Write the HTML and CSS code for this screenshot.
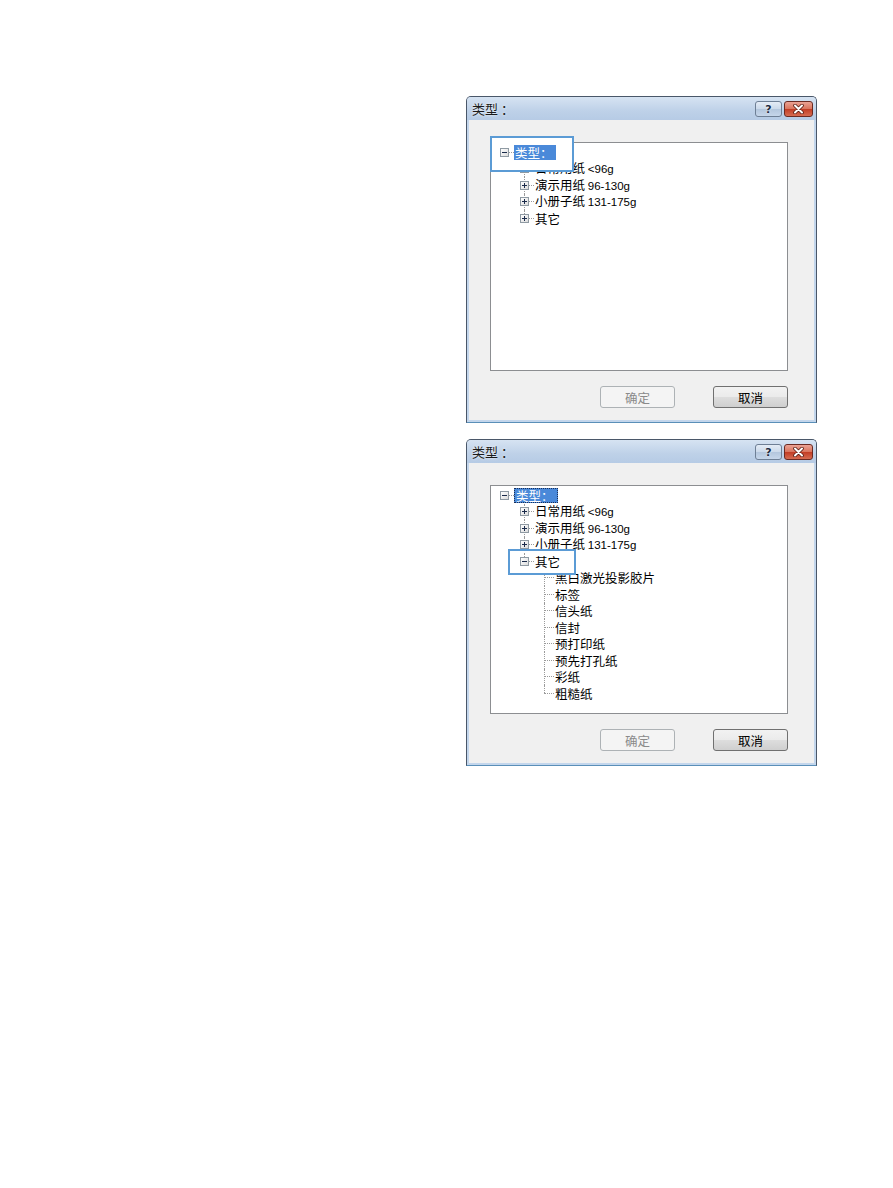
FILE: index.html
```html
<!DOCTYPE html>
<html lang="zh-CN">
<head>
    <meta charset="UTF-8">
    <title>类型</title>
    <link rel="stylesheet" href="styles.css">
</head>
<body>
    <div class="page">
        <!-- 第一个对话框：类型未展开 -->
        <div class="dialog">
            <div class="titlebar">
                <span class="title">类型 ：</span>
                <span class="caption-btn help">?</span>
                <span class="caption-btn close">
                    <svg width="13" height="10" viewBox="0 0 13 10">
                        <path d="M3 1.5 L10 8.5 M10 1.5 L3 8.5" stroke="#5a1d14" stroke-width="3.6" stroke-linecap="round"/>
                        <path d="M3 1.5 L10 8.5 M10 1.5 L3 8.5" stroke="#ffffff" stroke-width="2" stroke-linecap="round"/>
                    </svg>
                </span>
            </div>
            <div class="client">
                <div class="tree">
                    <div class="row level-0 callout callout-root">
                        <span class="box minus"></span><span class="dash"></span><span class="label selected">类型：</span>
                    </div>
                    <div class="row level-1">
                        <span class="box plus"></span><span class="dash"></span><span class="label">日常用纸 <span class="latin">&lt;96g</span></span>
                    </div>
                    <div class="row level-1">
                        <span class="box plus"></span><span class="dash"></span><span class="label">演示用纸 <span class="latin">96-130g</span></span>
                    </div>
                    <div class="row level-1">
                        <span class="box plus"></span><span class="dash"></span><span class="label">小册子纸 <span class="latin">131-175g</span></span>
                    </div>
                    <div class="row level-1 last">
                        <span class="box plus"></span><span class="dash"></span><span class="label">其它</span>
                    </div>
                </div>
                <div class="buttons">
                    <button class="btn" disabled>确定</button>
                    <button class="btn">取消</button>
                </div>
            </div>
        </div>

        <!-- 第二个对话框：其它已展开 -->
        <div class="dialog">
            <div class="titlebar">
                <span class="title">类型 ：</span>
                <span class="caption-btn help">?</span>
                <span class="caption-btn close">
                    <svg width="13" height="10" viewBox="0 0 13 10">
                        <path d="M3 1.5 L10 8.5 M10 1.5 L3 8.5" stroke="#5a1d14" stroke-width="3.6" stroke-linecap="round"/>
                        <path d="M3 1.5 L10 8.5 M10 1.5 L3 8.5" stroke="#ffffff" stroke-width="2" stroke-linecap="round"/>
                    </svg>
                </span>
            </div>
            <div class="client">
                <div class="tree">
                    <div class="row level-0">
                        <span class="box minus"></span><span class="dash"></span><span class="label selected focus">类型：</span>
                    </div>
                    <div class="row level-1">
                        <span class="box plus"></span><span class="dash"></span><span class="label">日常用纸 <span class="latin">&lt;96g</span></span>
                    </div>
                    <div class="row level-1">
                        <span class="box plus"></span><span class="dash"></span><span class="label">演示用纸 <span class="latin">96-130g</span></span>
                    </div>
                    <div class="row level-1">
                        <span class="box plus"></span><span class="dash"></span><span class="label">小册子纸 <span class="latin">131-175g</span></span>
                    </div>
                    <div class="row level-1 last callout callout-other">
                        <span class="box minus"></span><span class="dash"></span><span class="label">其它</span>
                    </div>
                    <div class="row level-2"><span class="leaf"></span><span class="label">黑白激光投影胶片</span></div>
                    <div class="row level-2"><span class="leaf"></span><span class="label">标签</span></div>
                    <div class="row level-2"><span class="leaf"></span><span class="label">信头纸</span></div>
                    <div class="row level-2"><span class="leaf"></span><span class="label">信封</span></div>
                    <div class="row level-2"><span class="leaf"></span><span class="label">预打印纸</span></div>
                    <div class="row level-2"><span class="leaf"></span><span class="label">预先打孔纸</span></div>
                    <div class="row level-2"><span class="leaf"></span><span class="label">彩纸</span></div>
                    <div class="row level-2 last"><span class="leaf"></span><span class="label">粗糙纸</span></div>
                </div>
                <div class="buttons">
                    <button class="btn" disabled>确定</button>
                    <button class="btn">取消</button>
                </div>
            </div>
        </div>
    </div>
</body>
</html>
```

FILE: styles.css
```css
body {
    margin: 0;
    background: #ffffff;
    font-family: "Noto Sans CJK SC", "Liberation Sans", sans-serif;
}
.page {
    display: flex;
    flex-direction: column;
    gap: 16px;
    padding: 96px 0 0 466px;
}
/* 窗口外框 */
.dialog {
    width: 351px;
    height: 327px;
    box-sizing: border-box;
    border: 1px solid #4a5769;
    border-bottom-color: #5a8fb8;
    border-radius: 5px 5px 0 0;
    background: #c3d6ec;
    display: flex;
    flex-direction: column;
}
.titlebar {
    height: 23px;
    flex: none;
    display: flex;
    align-items: flex-start;
    padding: 4px 3px 0 5px;
    box-sizing: border-box;
    border-radius: 4px 4px 0 0;
    background: linear-gradient(#d6e3f2, #bed1e8 60%, #b6cbe5);
}
.title {
    flex: 1;
    font-size: 13px;
    line-height: 15px;
    color: #1a1a1a;
    text-shadow: 0 0 3px #ffffff;
}
.caption-btn {
    height: 16px;
    box-sizing: border-box;
    border-radius: 3px;
    display: flex;
    align-items: center;
    justify-content: center;
}
.help {
    width: 27px;
    margin-right: 2px;
    border: 1px solid #6e7f95;
    background: linear-gradient(#e4ecf6, #cbd9ea 50%, #b3c6dd 51%, #c6d6ea);
    font-family: "DejaVu Sans", sans-serif;
    font-weight: bold;
    font-size: 11px;
    color: #1d2b3f;
    text-shadow: 0 0 2px #ffffff;
}
.close {
    width: 29px;
    border: 1px solid #6b2a22;
    background: linear-gradient(#eba395, #d9735c 50%, #c23c24 51%, #d66c52);
}
/* 客户区 */
.client {
    flex: 1;
    margin: 0 2px 2px;
    background: #f0f0f0;
    padding: 22px 26px 0 21px;
    display: flex;
    flex-direction: column;
}
.tree {
    height: 229px;
    box-sizing: border-box;
    border: 1px solid #8c8e91;
    background: #ffffff;
    padding-top: 1px;
}
.row {
    position: relative;
    height: 16.5px;
    display: flex;
    align-items: center;
    font-size: 12.5px;
    color: #000000;
}
.level-0 { padding-left: 9px; }
.level-1 { padding-left: 29px; }
.level-2 { padding-left: 49px; }
/* 树的竖线 */
.level-1::before,
.level-2::before {
    content: "";
    position: absolute;
    top: 0;
    bottom: 0;
    border-left: 1px dotted #9a9a9a;
}
.level-1::before { left: 33px; }
.level-2::before { left: 53px; }
.row.last::before { bottom: 50%; }
.box {
    position: relative;
    width: 9px;
    height: 9px;
    box-sizing: border-box;
    border: 1px solid #8f9aa3;
    background: linear-gradient(135deg, #ffffff, #dcdcdc);
}
.box::before {
    content: "";
    position: absolute;
    left: 1px;
    top: 3px;
    width: 5px;
    height: 1px;
    background: #1a2a4a;
}
.box.plus::after {
    content: "";
    position: absolute;
    left: 3px;
    top: 1px;
    width: 1px;
    height: 5px;
    background: #1a2a4a;
}
.dash {
    width: 5px;
    border-top: 1px dotted #9a9a9a;
}
.leaf {
    width: 10px;
    margin-left: 4px;
    border-top: 1px dotted #9a9a9a;
}
.label {
    line-height: 15px;
    padding: 0 2px 0 1px;
    white-space: nowrap;
}
.latin {
    font-family: "Liberation Sans", sans-serif;
    font-size: 11.5px;
}
.label.selected {
    background: #4a89d9;
    color: #ffffff;
    padding: 0 3px 0 1px;
}
.label.focus {
    box-sizing: border-box;
    border: 1px dotted #1c2f55;
    line-height: 13px;
    height: 15px;
}
/* 标注框 */
.callout {
    z-index: 1;
}
.callout::after {
    content: "";
    position: absolute;
    z-index: -1;
    box-sizing: border-box;
    border: 2px solid #5b9bd5;
    background: #ffffff;
}
.callout-root::after {
    left: -1px;
    top: -8px;
    width: 84px;
    height: 36px;
}
.callout-other::after {
    left: 17px;
    top: -4px;
    width: 68px;
    height: 26px;
}
/* 按钮 */
.buttons {
    display: flex;
    justify-content: flex-end;
    gap: 38px;
    margin-top: 15px;
}
.btn {
    width: 75px;
    height: 22px;
    padding: 0;
    border: 1px solid #707070;
    border-radius: 3px;
    background: linear-gradient(#f2f2f2, #ebebeb 48%, #dddddd 52%, #cfcfcf);
    font-family: "Noto Sans CJK SC", sans-serif;
    font-size: 12.5px;
    color: #000000;
}
.btn:disabled {
    border-color: #adb2b5;
    background: #f4f4f4;
    color: #8a8a8a;
}
```
